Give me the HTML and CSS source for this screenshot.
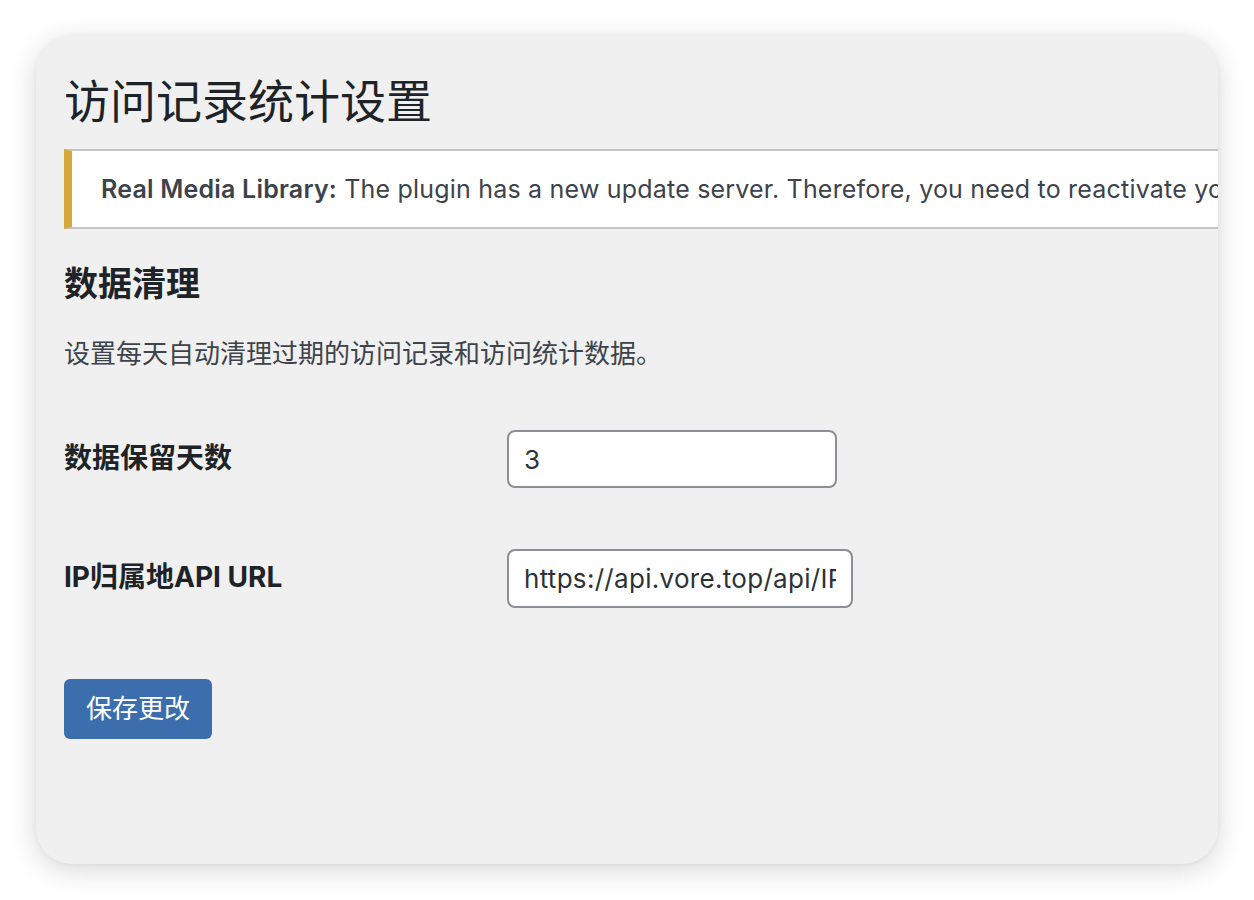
FILE: index.html
```html
<!DOCTYPE html>
<html lang="zh-CN">
<head>
<meta charset="utf-8">
<title>访问记录统计设置</title>
<link rel="stylesheet" href="styles.css">
</head>
<body>
<div class="card">
  <h1 class="title">访问记录统计设置</h1>
  <div class="notice"><p><strong>Real Media Library:</strong> The plugin has a new update server. Therefore, you need to reactivate your license to receive further updates.</p></div>
  <h2 class="section">数据清理</h2>
  <p class="desc">设置每天自动清理过期的访问记录和访问统计数据。</p>
  <form class="form">
    <div class="row row-first">
      <label class="label" for="days">数据保留天数</label>
      <input class="input input-days" id="days" type="text" value="3">
    </div>
    <div class="row">
      <label class="label" for="api">IP归属地API URL</label>
      <input class="input input-url" id="api" type="text" value="https://api.vore.top/api/IPdata?ip=">
    </div>
    <div class="actions">
      <button class="btn" type="button">保存更改</button>
    </div>
  </form>
</div>
</body>
</html>
```
FILE: styles.css
```css
html, body {
  margin: 0;
  padding: 0;
  background: #ffffff;
}
body {
  width: 1254px;
  height: 900px;
  overflow: hidden;
  font-family: Inter, "Noto Sans CJK SC", sans-serif;
  color: #1d2327;
}
.card {
  box-sizing: border-box;
  margin: 36px 0 0 36px;
  width: 1182px;
  height: 828px;
  border-radius: 36px;
  background: #f0f0f1;
  box-shadow: 0 6px 28px rgba(0, 0, 0, 0.16), 0 0 6px rgba(0,0,0,0.04);
  overflow: hidden;
  padding: 33px 0 0 28px;
}
.title {
  margin: 0;
  font-size: 46px;
  line-height: 64px;
  height: 64px;
  font-weight: 400;
  color: #1d2327;
  font-family: Inter, "Noto Sans CJK SC", sans-serif;
}
.notice {
  margin-top: 16px;
  box-sizing: border-box;
  height: 80px;
  width: 1400px;
  background: #fff;
  border-top: 2px solid #c3c4c7;
  border-bottom: 2px solid #c3c4c7;
  border-left: 8px solid #d5a83b;
  padding-left: 29px;
  display: flex;
  align-items: center;
}
.notice p {
  margin: 0;
  white-space: nowrap;
  font-size: 25px;
  line-height: 36px;
  color: #3c434a;
  letter-spacing: 0.2px;
}
.notice strong {
  font-weight: 600;
}
.section {
  margin: 33px 0 0 0;
  font-size: 34px;
  line-height: 44px;
  font-weight: 700;
  color: #1d2327;
}
.desc {
  margin: 30px 0 0 0;
  font-size: 26px;
  line-height: 36px;
  color: #3c434a;
}
.form {
  margin: 0;
}
.row {
  display: flex;
  align-items: center;
  margin-top: 61px;
}
.row-first {
  margin-top: 58px;
}
.label {
  width: 443px;
  flex: none;
  font-size: 28px;
  font-weight: 700;
  color: #1d2327;
  line-height: 36px;
  margin-top: -3px;
}
.input {
  box-sizing: border-box;
  height: 58px;
  border: 2px solid #8c8f94;
  border-radius: 8px;
  background: #fff;
  padding: 0 15px;
  font-family: Inter, "Noto Sans CJK SC", sans-serif;
  font-size: 26px;
  letter-spacing: 0.3px;
  color: #2c3338;
  outline: none;
}
.input-days {
  width: 330px;
}
.input-url {
  width: 346px;
  height: 59px;
}
.actions {
  margin-top: 71px;
}
.btn {
  width: 148px;
  height: 60px;
  border: none;
  border-radius: 6px;
  background: #3c6ead;
  color: #fff;
  font-family: Inter, "Noto Sans CJK SC", sans-serif;
  font-size: 26px;
  line-height: 60px;
  padding: 0;
  cursor: pointer;
}
```
